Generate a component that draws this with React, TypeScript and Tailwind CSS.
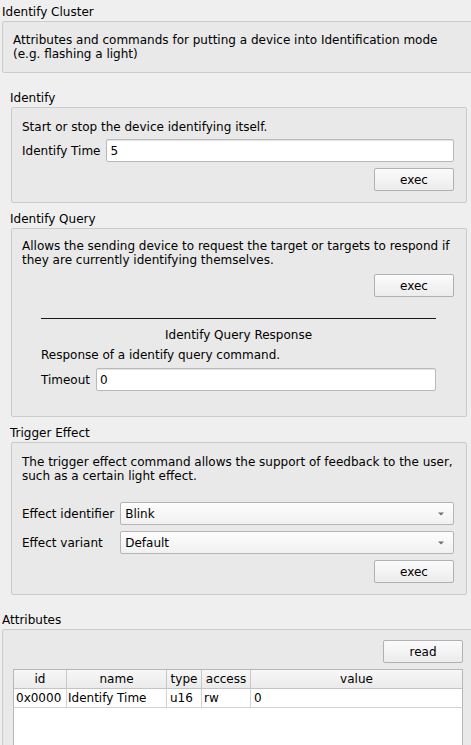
import React from "react";

function Btn({ label }: { label: string }) {
  return (
    <div className="w-[80px] h-[23px] border border-[#b1b1b1] rounded-[2px] bg-linear-to-b from-[#fbfbfb] to-[#ececec] flex items-center justify-center text-black">
      {label}
    </div>
  );
}

function Input({ value }: { value: string }) {
  return (
    <div className="flex-1 h-[23px] border border-[#b9b9b9] rounded-[2px] bg-white flex items-center pl-[3px] shadow-[inset_0_1px_0_#e4e4e4]">
      {value}
    </div>
  );
}

function Combo({ value }: { value: string }) {
  return (
    <div className="h-[23px] border border-[#b5b5b5] rounded-[2px] bg-linear-to-b from-[#fdfdfd] to-[#f1f1f1] flex items-center pl-[4px] pr-[9px]">
      <span className="flex-1">{value}</span>
      <svg width="6" height="4" viewBox="0 0 6 4">
        <polygon points="0,0.5 6,0.5 3,3.5" fill="#707070" />
      </svg>
    </div>
  );
}

export default function App() {
  return (
    <div className="w-[471px] h-[745px] overflow-hidden bg-[#efefef] text-black font-['DejaVu_Sans',sans-serif] text-[12px] leading-[14px]">
      <div className="w-[480px] flex flex-col">
        {/* Identify Cluster */}
        <div className="h-[14px] mt-[5px] ml-[2px] whitespace-nowrap">Identify Cluster</div>
        <div className="mt-[2px] ml-[2px] w-[474px] border border-[#cbcbcb] rounded-[2px] bg-[#e9e9e9] pt-[11px] pb-[11px] pl-[10px] whitespace-nowrap">
          Attributes and commands for putting a device into Identification mode
          <br />
          (e.g. flashing a light)
        </div>

        {/* Identify */}
        <div className="h-[14px] mt-[18px] ml-[10px] whitespace-nowrap">Identify</div>
        <div className="mt-[2px] ml-[11px] w-[456px] border border-[#cbcbcb] rounded-[2px] bg-[#e9e9e9] pt-[12px] pb-[11px] pl-[10px] pr-[12px] flex flex-col">
          <div className="h-[14px] whitespace-nowrap">Start or stop the device identifying itself.</div>
          <div className="mt-[5px] flex items-center gap-[6px]">
            <span className="whitespace-nowrap">Identify Time</span>
            <Input value="5" />
          </div>
          <div className="mt-[6px] flex justify-end">
            <Btn label="exec" />
          </div>
        </div>

        {/* Identify Query */}
        <div className="h-[14px] mt-[9px] ml-[10px] whitespace-nowrap">Identify Query</div>
        <div className="mt-[2px] ml-[11px] w-[456px] border border-[#cbcbcb] rounded-[2px] bg-[#e9e9e9] pt-[10px] pb-[25px] pl-[10px] pr-[12px] flex flex-col">
          <div className="whitespace-nowrap">
            Allows the sending device to request the target or targets to respond if
            <br />
            they are currently identifying themselves.
          </div>
          <div className="mt-[7px] flex justify-end">
            <Btn label="exec" />
          </div>
          <div className="mt-[21px] ml-[19px] mr-[18px] flex flex-col">
            <div className="h-px bg-[#1a1a1a]" />
            <div className="mt-[9px] h-[14px] text-center whitespace-nowrap">Identify Query Response</div>
            <div className="mt-[6px] h-[14px] whitespace-nowrap">Response of a identify query command.</div>
            <div className="mt-[6px] flex items-center gap-[6px]">
              <span className="whitespace-nowrap">Timeout</span>
              <Input value="0" />
            </div>
          </div>
        </div>

        {/* Trigger Effect */}
        <div className="h-[14px] mt-[9px] ml-[10px] whitespace-nowrap">Trigger Effect</div>
        <div className="mt-[2px] ml-[11px] w-[456px] border border-[#cbcbcb] rounded-[2px] bg-[#e9e9e9] pt-[12px] pb-[11px] pl-[10px] pr-[12px] flex flex-col">
          <div className="whitespace-nowrap">
            The trigger effect command allows the support of feedback to the user,
            <br />
            such as a certain light effect.
          </div>
          <div className="mt-[19px] grid grid-cols-[auto_1fr] gap-x-[6px] gap-y-[6px] items-center">
            <span className="whitespace-nowrap">Effect identifier</span>
            <Combo value="Blink" />
            <span className="whitespace-nowrap">Effect variant</span>
            <Combo value="Default" />
          </div>
          <div className="mt-[6px] flex justify-end">
            <Btn label="exec" />
          </div>
        </div>

        {/* Attributes */}
        <div className="h-[14px] mt-[18px] ml-[2px] whitespace-nowrap">Attributes</div>
        <div className="mt-[2px] ml-[2px] w-[474px] h-[200px] border border-[#cbcbcb] rounded-[2px] bg-[#e9e9e9] pt-[10px] pl-[10px] pr-[12px] flex flex-col">
          <div className="flex justify-end">
            <Btn label="read" />
          </div>
          <div className="mt-[6px] h-[150px] border border-[#b7b7b7] bg-white flex flex-col">
            <div className="flex h-[19px] border-b border-[#c4c4c4] bg-linear-to-b from-[#f7f7f7] to-[#ebebeb]">
              <div className="w-[53px] border-r border-[#c8c8c8] flex items-center justify-center">id</div>
              <div className="w-[100px] border-r border-[#c8c8c8] flex items-center justify-center">name</div>
              <div className="w-[35px] border-r border-[#c8c8c8] flex items-center justify-center">type</div>
              <div className="w-[49px] border-r border-[#c8c8c8] flex items-center justify-center">access</div>
              <div className="flex-1 flex items-center justify-center">value</div>
            </div>
            <div className="flex h-[19px] border-b border-[#d2d2d2]">
              <div className="w-[53px] border-r border-[#d2d2d2] flex items-center pl-[2px] whitespace-nowrap">0x0000</div>
              <div className="w-[100px] border-r border-[#d2d2d2] flex items-center pl-[1px] whitespace-nowrap">Identify Time</div>
              <div className="w-[35px] border-r border-[#d2d2d2] flex items-center pl-[3px]">u16</div>
              <div className="w-[49px] border-r border-[#d2d2d2] flex items-center pl-[2px]">rw</div>
              <div className="flex-1 flex items-center pl-[3px]">0</div>
            </div>
          </div>
        </div>
      </div>
    </div>
  );
}
